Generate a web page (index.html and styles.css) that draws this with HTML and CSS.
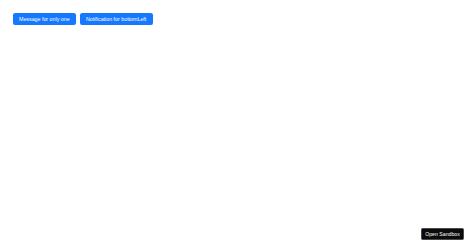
FILE: index.html
```html
<!DOCTYPE html>
<html>
<head>
<meta charset="utf-8">
<link rel="stylesheet" href="styles.css">
</head>
<body>
<div class="toolbar">
  <button class="btn btn-primary">Message for only one</button>
  <button class="btn btn-primary">Notification for bottomLeft</button>
</div>
<button class="sandbox">Open Sandbox</button>
</body>
</html>
```
FILE: styles.css
```css
html, body {
  margin: 0;
  padding: 0;
  background: #ffffff;
  font-family: "Liberation Sans", Arial, sans-serif;
}
.toolbar {
  display: flex;
  gap: 3.5px;
  padding: 12.7px 0 0 12.6px;
}
.btn {
  font-family: "Liberation Sans", Arial, sans-serif;
  font-size: 5.3px;
  height: 12.6px;
  line-height: 12.6px;
  padding: 0 6.4px;
  border: none;
  border-radius: 2.2px;
  cursor: pointer;
  box-sizing: border-box;
}
.btn-primary {
  background: #1677ff;
  color: #ffffff;
  box-shadow: 0 0.7px 0 rgba(5, 145, 255, 0.1);
}
.sandbox {
  position: fixed;
  right: 10px;
  bottom: 7.7px;
  height: 12.6px;
  width: 43px;
  padding: 0;
  font-family: "Liberation Sans", Arial, sans-serif;
  font-size: 5.2px;
  line-height: 11px;
  color: #ffffff;
  background: #0b0b0b;
  border: 0.6px solid #4a4a4a;
  border-radius: 1.5px;
  box-sizing: border-box;
}
```
